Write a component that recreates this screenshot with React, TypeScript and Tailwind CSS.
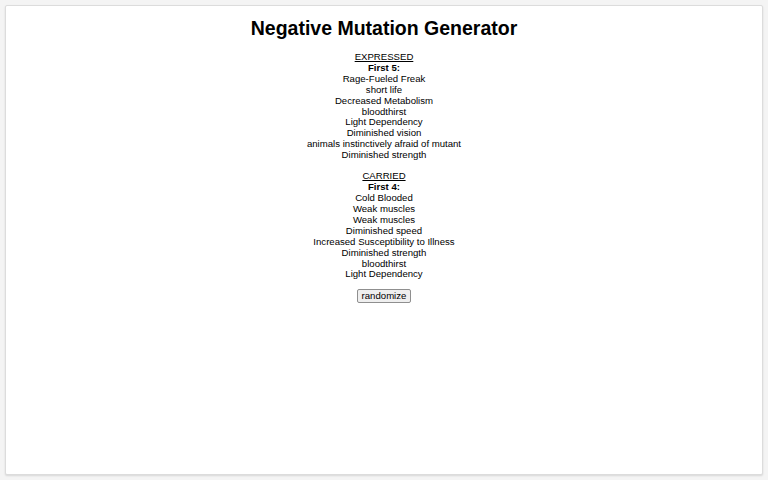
import React from 'react';

const expressed = [
  'Rage-Fueled Freak',
  'short life',
  'Decreased Metabolism',
  'bloodthirst',
  'Light Dependency',
  'Diminished vision',
  'animals instinctively afraid of mutant',
  'Diminished strength',
];

const carried = [
  'Cold Blooded',
  'Weak muscles',
  'Weak muscles',
  'Diminished speed',
  'Increased Susceptibility to Illness',
  'Diminished strength',
  'bloodthirst',
  'Light Dependency',
];

const Group: React.FC<{ label: string; first: number; items: string[] }> = ({ label, first, items }) => (
  <div className="flex flex-col items-center">
    <span className="underline">{label}</span>
    <span className="font-bold">First {first}:</span>
    {items.map((m, i) => (
      <span key={i}>{m}</span>
    ))}
  </div>
);

export default function App() {
  return (
    <div className="h-[480px] w-[768px] bg-[#f4f4f4] p-[5px] text-black" style={{ fontFamily: '"Liberation Sans", Arial, sans-serif' }}>
      <div className="flex h-full flex-col items-center rounded-[2px] border border-[#dcdcdc] bg-white shadow-[0_1px_2px_rgba(0,0,0,0.12)]">
        <h1 className="mt-[10px] text-[19.5px] font-bold leading-[24px]">Negative Mutation Generator</h1>
        <div className="mt-[12px] flex flex-col items-center gap-[10.2px] text-[9.6px] leading-[10.9px]">
          <Group label="EXPRESSED" first={5} items={expressed} />
          <Group label="CARRIED" first={4} items={carried} />
        </div>
        <button className="mt-[9px] rounded-[2px] border border-[#8f8f8f] bg-[#efefef] px-[4px] text-[9.6px] leading-[12px]">
          randomize
        </button>
      </div>
    </div>
  );
}
